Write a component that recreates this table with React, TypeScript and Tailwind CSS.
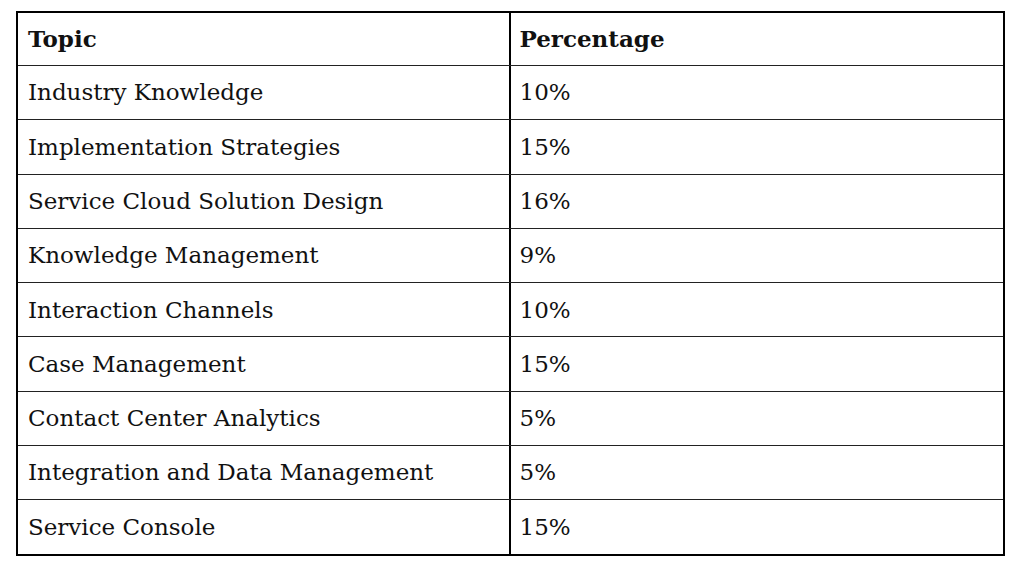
const rows: [string, string][] = [
  ["Industry Knowledge", "10%"],
  ["Implementation Strategies", "15%"],
  ["Service Cloud Solution Design", "16%"],
  ["Knowledge Management", "9%"],
  ["Interaction Channels", "10%"],
  ["Case Management", "15%"],
  ["Contact Center Analytics", "5%"],
  ["Integration and Data Management", "5%"],
  ["Service Console", "15%"],
];

export default function App() {
  return (
    <div
      className="w-[1024px] h-[582px] bg-white pl-4 pt-[11px] text-[#111] text-[23px]"
      style={{ fontFamily: '"DejaVu Serif", "Liberation Serif", serif' }}
    >
      <div className="w-[989px] border-2 border-black">
        <div className="grid grid-cols-2 h-[52px] font-bold">
          <div className="flex items-center pl-[10px] border-r-2 border-black">Topic</div>
          <div className="flex items-center pl-[9px]">Percentage</div>
        </div>
        {rows.map(([topic, pct]) => (
          <div key={topic} className="grid grid-cols-2 h-[54.3px] border-t border-[#222]">
            <div className="flex items-center pl-[10px] border-r-2 border-black">{topic}</div>
            <div className="flex items-center pl-[9px]">{pct}</div>
          </div>
        ))}
      </div>
    </div>
  );
}
